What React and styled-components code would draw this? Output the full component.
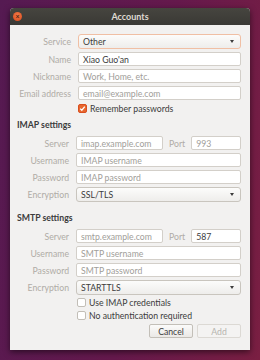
import styled, { createGlobalStyle } from "styled-components";

const GlobalStyle = createGlobalStyle`
	html, body {
		margin: 0;
		padding: 0;
	}
	body {
		width: 260px;
		height: 360px;
		overflow: hidden;
		background: linear-gradient(100deg, #551a52 0%, #65194c 55%, #7a1f42 100%);
		font-family: Lato, "Liberation Sans", sans-serif;
		font-size: 8.7px;
		color: #3c3c3c;
	}
`;

const Stage = styled.div`
	padding: 8px 10px 0 10px;
`;

const Window = styled.div`
	width: 240px;
	height: 342px;
	background: #f2f1f0;
	border-radius: 4px 4px 0 0;
	box-shadow: 0 2px 6px rgba(0, 0, 0, 0.55);
	display: flex;
	flex-direction: column;
	overflow: hidden;
`;

const TitleBar = styled.div`
	position: relative;
	height: 17px;
	flex: none;
	background: linear-gradient(#46453f, #3a3935);
	color: #dfdbd2;
	font-weight: bold;
	font-size: 9px;
	display: flex;
	align-items: center;
	justify-content: center;
`;

const CloseButton = styled.span`
	position: absolute;
	left: 3px;
	top: 4px;
	width: 9px;
	height: 9px;
	border-radius: 50%;
	background: radial-gradient(circle at 50% 35%, #f27a47, #d9491c);
	color: #4a2214;
	font-size: 7px;
	line-height: 9px;
	text-align: center;
	font-weight: bold;
`;

const Body = styled.div`
	padding: 9px 9px 0 0;
	display: flex;
	flex-direction: column;
`;

const Grid = styled.div`
	display: grid;
	grid-template-columns: ${(p) => p.$labelWidth}px 1fr;
	column-gap: 7px;
	row-gap: 3px;
	align-items: center;
`;

const Label = styled.span`
	text-align: right;
	color: #b0aca6;
	white-space: nowrap;
`;

const Entry = styled.div`
	height: 14px;
	box-sizing: border-box;
	border: 1px solid #d3cfc9;
	border-radius: 2px;
	background: #ffffff;
	padding: 0 4px;
	display: flex;
	align-items: center;
	color: ${(p) => (p.$placeholder ? "#a19e99" : "#3c3c3c")};
	white-space: nowrap;
	overflow: hidden;
`;

const Combo = styled.div`
	height: 15px;
	box-sizing: border-box;
	border: 1px solid ${(p) => (p.$focused ? "#f0bfa4" : "#c9c5be")};
	border-radius: 3px;
	background: linear-gradient(#fcfcfb, #eeedeb);
	padding: 0 6px 0 4px;
	display: flex;
	align-items: center;
	justify-content: space-between;
	color: #3c3c3c;
`;

const Arrow = styled.span`
	width: 0;
	height: 0;
	border-left: 2.5px solid transparent;
	border-right: 2.5px solid transparent;
	border-top: 3px solid #3c3c3c;
`;

const ServerRow = styled.div`
	display: flex;
	align-items: center;
`;

const PortLabel = styled.span`
	color: #b0aca6;
	margin: 0 6px 0 6px;
`;

const CheckRow = styled.label`
	grid-column: 2;
	height: 11px;
	display: flex;
	align-items: center;
	gap: 3px;
	color: #3c3c3c;
	margin-left: ${(p) => p.$offset || 0}px;
	margin-top: ${(p) => (p.$tight ? -1 : 0)}px;
`;

const CheckBox = styled.span`
	width: 9px;
	height: 9px;
	box-sizing: border-box;
	border-radius: 2px;
	border: 1px solid ${(p) => (p.$checked ? "#d94f1f" : "#c2beb7")};
	background: ${(p) => (p.$checked ? "#e8672f" : "#ffffff")};
	display: flex;
	align-items: center;
	justify-content: center;
`;

const Heading = styled.div`
	font-weight: bold;
	color: #3c3c3c;
	line-height: 11px;
	padding-left: 7px;
	margin: ${(p) => p.$top}px 0 6px 0;
`;

const Buttons = styled.div`
	display: flex;
	justify-content: flex-end;
	gap: 4px;
	margin-top: 3px;
`;

const Button = styled.div`
	width: 44px;
	height: 14px;
	box-sizing: border-box;
	border: 1px solid ${(p) => (p.$disabled ? "#dcd9d4" : "#c3bfb8")};
	border-radius: 2px;
	background: ${(p) =>
		p.$disabled ? "#f4f3f2" : "linear-gradient(#fbfbfa, #ebe9e6)"};
	color: ${(p) => (p.$disabled ? "#b6b3ae" : "#3c3c3c")};
	display: flex;
	align-items: center;
	justify-content: center;
`;

function Check({ checked, children, offset, tight }) {
	return (
		<CheckRow $offset={offset} $tight={tight}>
			<CheckBox $checked={checked}>
				{checked && (
					<svg width="7" height="7" viewBox="0 0 7 7">
						<path
							d="M1.2 3.6 L2.8 5.2 L5.8 1.6"
							fill="none"
							stroke="#ffffff"
							strokeWidth="1.3"
						/>
					</svg>
				)}
			</CheckBox>
			{children}
		</CheckRow>
	);
}

function Server({ placeholder, port, portPlaceholder }) {
	return (
		<ServerRow>
			<Entry $placeholder style={{ width: 87 }}>
				{placeholder}
			</Entry>
			<PortLabel>Port</PortLabel>
			<Entry $placeholder={portPlaceholder} style={{ flex: 1 }}>
				{port}
			</Entry>
		</ServerRow>
	);
}

export default function App() {
	return (
		<>
			<GlobalStyle />
			<Stage>
				<Window>
					<TitleBar>
						<CloseButton>×</CloseButton>
						Accounts
					</TitleBar>
					<Body>
						<Grid $labelWidth={61}>
							<Label>Service</Label>
							<Combo $focused>
								Other
								<Arrow />
							</Combo>
							<Label>Name</Label>
							<Entry>Xiao Guo'an</Entry>
							<Label>Nickname</Label>
							<Entry $placeholder>Work, Home, etc.</Entry>
							<Label>Email address</Label>
							<Entry $placeholder>email@example.com</Entry>
							<Check checked>Remember passwords</Check>
						</Grid>

						<Heading $top={5}>IMAP settings</Heading>
						<Grid $labelWidth={59}>
							<Label>Server</Label>
							<Server placeholder="imap.example.com" port="993" portPlaceholder />
							<Label>Username</Label>
							<Entry $placeholder>IMAP username</Entry>
							<Label>Password</Label>
							<Entry $placeholder>IMAP password</Entry>
							<Label>Encryption</Label>
							<Combo>
								SSL/TLS
								<Arrow />
							</Combo>
						</Grid>

						<Heading $top={10}>SMTP settings</Heading>
						<Grid $labelWidth={59}>
							<Label>Server</Label>
							<Server placeholder="smtp.example.com" port="587" />
							<Label>Username</Label>
							<Entry $placeholder>SMTP username</Entry>
							<Label>Password</Label>
							<Entry $placeholder>SMTP password</Entry>
							<Label>Encryption</Label>
							<Combo>
								STARTTLS
								<Arrow />
							</Combo>
							<Check offset={1} tight>
								Use IMAP credentials
							</Check>
							<Check offset={1} tight>
								No authentication required
							</Check>
						</Grid>

						<Buttons>
							<Button>Cancel</Button>
							<Button $disabled>Add</Button>
						</Buttons>
					</Body>
				</Window>
			</Stage>
		</>
	);
}
